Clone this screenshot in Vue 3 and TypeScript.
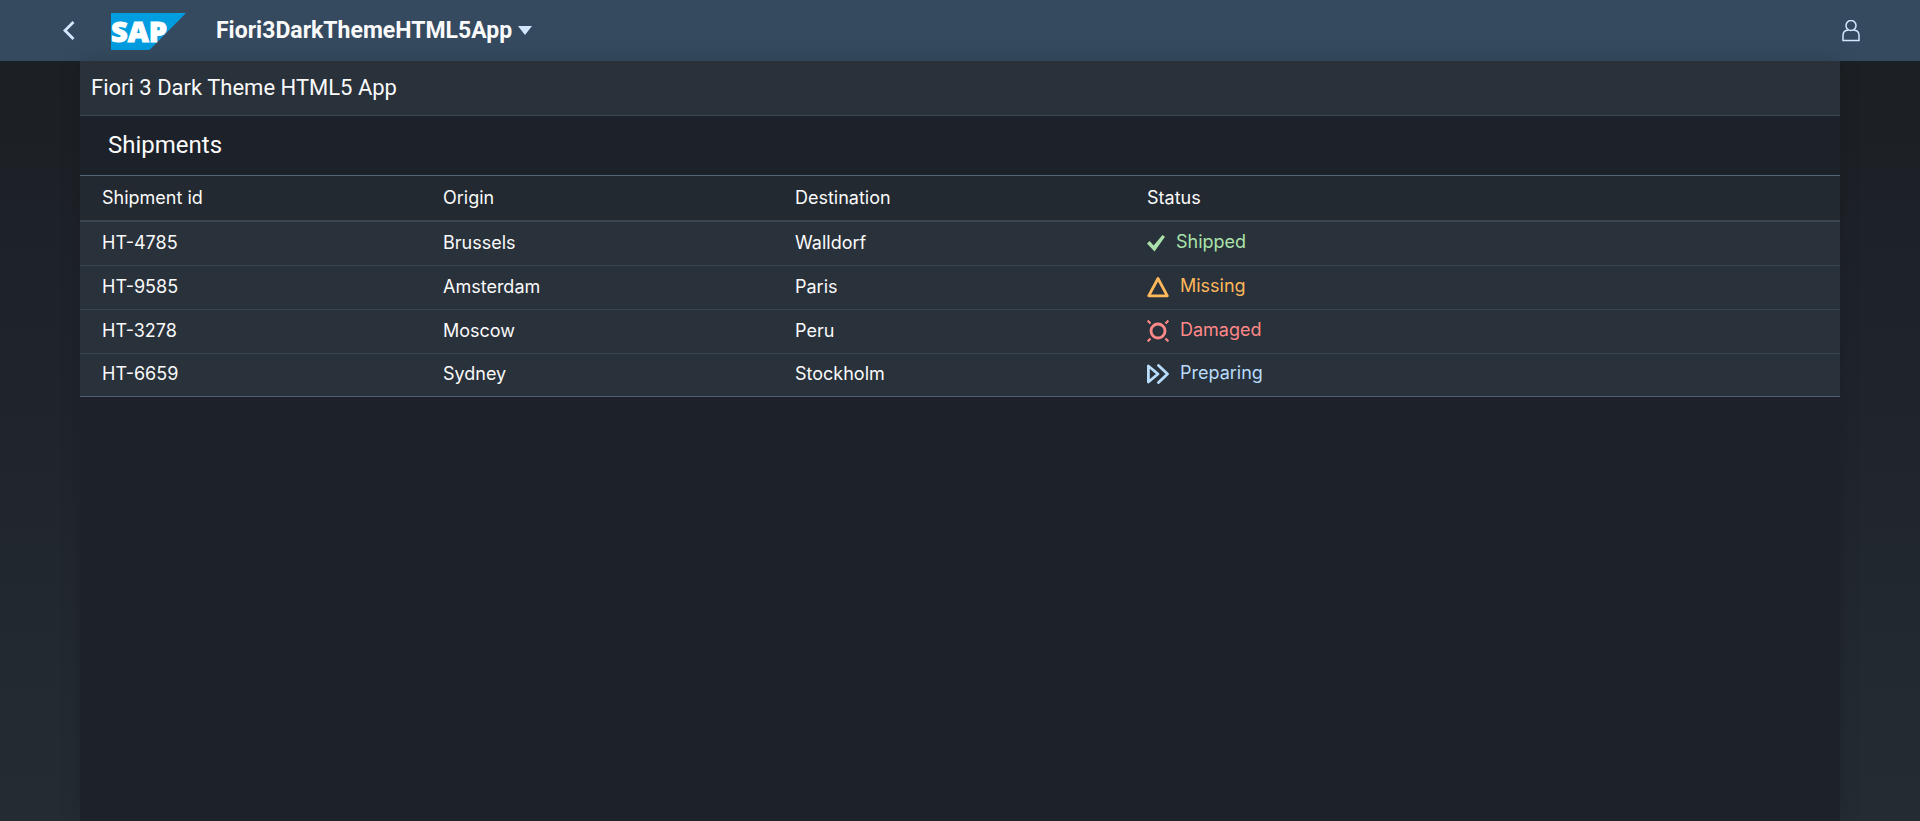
<script setup lang="ts">
type State = 'success' | 'warning' | 'error' | 'information'

interface Shipment {
  id: string
  origin: string
  destination: string
  status: string
  state: State
}

const columns: string[] = ['Shipment id', 'Origin', 'Destination', 'Status']

const shipments: Shipment[] = [
  { id: 'HT-4785', origin: 'Brussels', destination: 'Walldorf', status: 'Shipped', state: 'success' },
  { id: 'HT-9585', origin: 'Amsterdam', destination: 'Paris', status: 'Missing', state: 'warning' },
  { id: 'HT-3278', origin: 'Moscow', destination: 'Peru', status: 'Damaged', state: 'error' },
  { id: 'HT-6659', origin: 'Sydney', destination: 'Stockholm', status: 'Preparing', state: 'information' },
]
</script>

<template>
  <div class="shell">
    <header class="shell-bar">
      <button class="icon-button back" type="button" aria-label="Back">
        <svg width="14" height="22" viewBox="0 0 14 22" aria-hidden="true">
          <path d="M11.5 2 3 10.500l8.500 8.500" fill="none" stroke="#d1e8ff" stroke-width="2.800" />
        </svg>
      </button>
      <a class="logo" href="#" aria-label="SAP home">
        <svg width="76" height="48" viewBox="-1 -5 76 48" aria-hidden="true">
          <path d="M0 1h75L38.500 38H0z" fill="#009de0" />
          <text class="logo-text" x="0" y="30">SAP</text>
        </svg>
      </a>
      <button class="app-menu" type="button">
        <span>Fiori3DarkThemeHTML5App</span>
        <svg width="14" height="9" viewBox="0 0 14 9" aria-hidden="true">
          <path d="M0 0h14L7 9z" fill="#d1e8ff" />
        </svg>
      </button>
      <button class="icon-button user" type="button" aria-label="User menu">
        <svg width="18" height="22" viewBox="0 0 18 22" fill="none" stroke="#d1e8ff" stroke-width="1.500" aria-hidden="true">
          <circle cx="9" cy="5.500" r="5" />
          <path d="M6.500 10C2.500 10.300 1 13 1 15.500V20.500h16v-5c0-2.500-1.500-5.200-5.500-5.500" />
        </svg>
      </button>
    </header>

    <main class="page">
      <h1 class="page-title">Fiori 3 Dark Theme HTML5 App</h1>
      <section class="shipments" aria-labelledby="shipments-title">
        <h2 id="shipments-title" class="table-title">Shipments</h2>
        <table aria-labelledby="shipments-title">
          <thead>
            <tr>
              <th v-for="column in columns" :key="column" scope="col">{{ column }}</th>
            </tr>
          </thead>
          <tbody>
            <tr v-for="shipment in shipments" :key="shipment.id">
              <td>{{ shipment.id }}</td>
              <td>{{ shipment.origin }}</td>
              <td>{{ shipment.destination }}</td>
              <td>
                <span class="status" :class="shipment.state">
                  <svg v-if="shipment.state === 'success'" width="18" height="22" viewBox="0 0 18 22" aria-hidden="true">
                    <path d="M0 11.500 2.600 9l4 4.600L15.500 3 18 4.800 7.500 19.500z" fill="currentColor" />
                  </svg>
                  <svg v-else-if="shipment.state === 'warning'" width="22" height="22" viewBox="0 0 22 22" aria-hidden="true">
                    <path d="M11 2.500 20.300 19.800H1.700z" fill="none" stroke="currentColor" stroke-width="2.800" stroke-linejoin="round" />
                  </svg>
                  <svg v-else-if="shipment.state === 'error'" width="22" height="22" viewBox="0 0 22 22" fill="none" stroke="currentColor" aria-hidden="true">
                    <circle cx="11" cy="11" r="7" stroke-width="2.800" />
                    <path d="M.6.6l2.900 2.900M21.400.6l-2.900 2.900M.6 21.400l2.900-2.900M21.400 21.400l-2.900-2.900" stroke-width="2.200" />
                  </svg>
                  <svg v-else width="22" height="22" viewBox="0 0 22 22" fill="none" stroke="currentColor" stroke-width="2.800" stroke-linejoin="round" stroke-linecap="round" aria-hidden="true">
                    <path d="M1.400 3v16L11 11z" />
                    <path d="M11.500 2.500 20.500 11l-9 8.500" />
                  </svg>
                  <span class="status-text">{{ shipment.status }}</span>
                </span>
              </td>
            </tr>
          </tbody>
        </table>
      </section>
    </main>
  </div>
</template>

<style>
body {
  margin: 0;
}
</style>

<style scoped>
.shell {
  display: flex;
  flex-direction: column;
  min-height: 100vh;
  background: linear-gradient(to bottom, #1a1f22, #1e222a 35%, #242c33);
  color: #fafafa;
  font-family: Roboto, "Liberation Sans", sans-serif;
}

.shell-bar {
  display: flex;
  align-items: center;
  height: 61px;
  padding: 0 58px;
  box-sizing: border-box;
  background: #354a5f;
}

button {
  border: 0;
  padding: 0;
  background: none;
  color: inherit;
  font: inherit;
  cursor: pointer;
}

.icon-button {
  display: flex;
  align-items: center;
  justify-content: center;
}

.back {
  width: 22px;
}

.logo {
  display: flex;
  margin-left: 30px;
}

.logo-text {
  fill: #fff;
  stroke: #fff;
  stroke-width: 1px;
  font-family: "Open Sans", "Noto Sans", sans-serif;
  font-size: 29px;
  font-weight: 800;
}

.app-menu {
  display: flex;
  align-items: center;
  gap: 6px;
  margin-left: 30px;
  font-size: 23px;
  font-weight: 700;
}

.user {
  width: 22px;
  margin-left: auto;
}

.page {
  flex: 1;
  margin: 0 80px;
  background: #1d2129;
  box-shadow: 0 0 20px rgba(0, 0, 0, 0.15);
}

.page-title {
  margin: 0;
  padding: 0 11px;
  border-bottom: 1px solid #3a4552;
  background: #29313a;
  font-size: 22px;
  font-weight: 400;
  line-height: 54px;
}

.table-title {
  margin: 0;
  padding: 0 28px;
  border-bottom: 1px solid #53687a;
  font-size: 24px;
  font-weight: 400;
  line-height: 59px;
}

table {
  width: 100%;
  table-layout: fixed;
  border-collapse: separate;
  border-spacing: 0;
  font-family: Inter, Roboto, sans-serif;
  font-size: 18px;
  line-height: 22px;
}

th,
td {
  box-sizing: border-box;
  text-align: left;
  font-weight: 400;
}

th {
  width: 20%;
  height: 46px;
  padding: 0 11px;
  border-bottom: 2px solid #3a4652;
  background: #232930;
}

th:last-child {
  width: 40%;
}

td {
  height: 44px;
  padding: 0 11px 2px;
  border-bottom: 1px solid #3a4552;
  background: #29313a;
}

th:first-child,
td:first-child {
  padding-left: 22px;
}

tr:last-child td {
  height: 43px;
  border-bottom-color: #4e5f72;
}

.status {
  display: flex;
  align-items: center;
  gap: 11px;
}

.status-text {
  line-height: 20px;
  padding-bottom: 2px;
}

.success {
  color: #abe2ab;
}

.warning {
  color: #ffb85b;
}

.error {
  color: #ff8888;
}

.information {
  color: #b8dcfb;
}
</style>
